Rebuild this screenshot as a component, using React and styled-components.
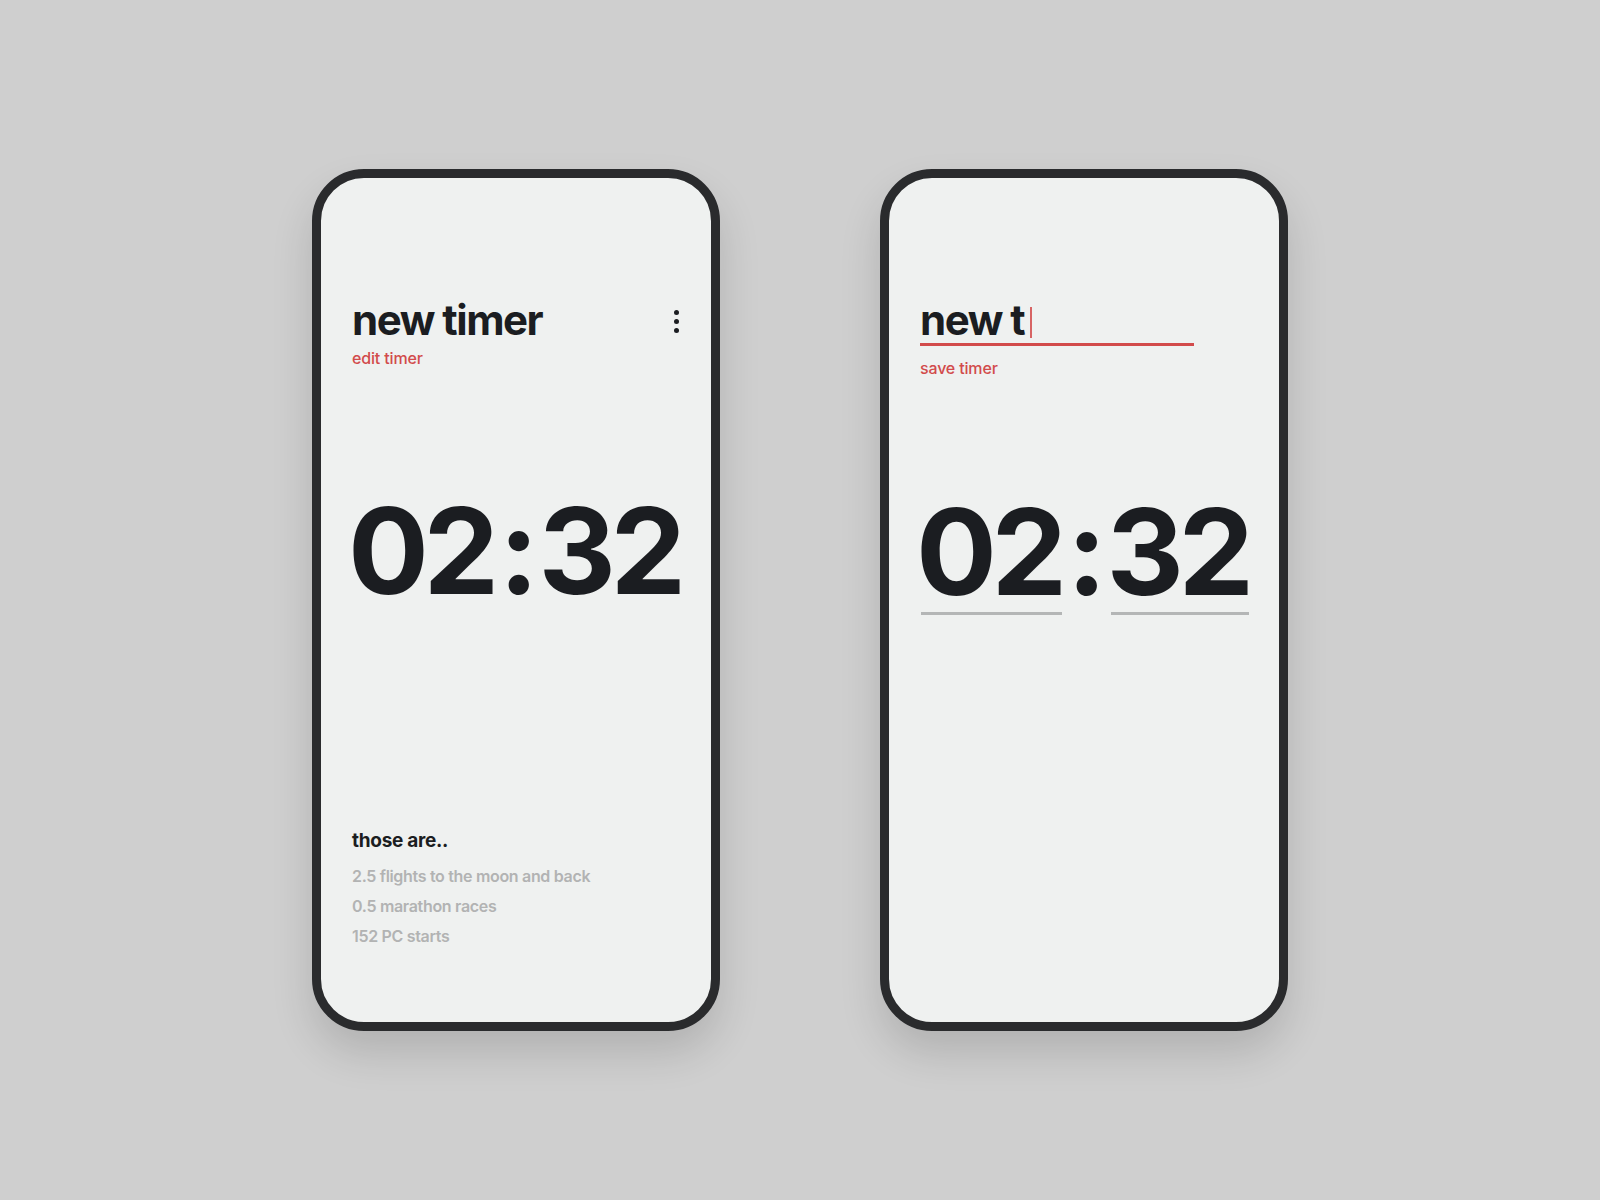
import React from 'react';
import styled, { createGlobalStyle } from 'styled-components';

const GlobalStyle = createGlobalStyle`
  html, body {
    margin: 0;
    padding: 0;
    background: #cfcfcf;
  }
  body {
    font-family: Inter, "Noto Sans", "Liberation Sans", sans-serif;
    -webkit-font-smoothing: antialiased;
  }
`;

const Stage = styled.div`
  width: 1600px;
  height: 1200px;
  display: flex;
  align-items: center;
  justify-content: center;
  gap: 160px;
`;

const Phone = styled.div`
  box-sizing: border-box;
  width: 408px;
  height: 862px;
  border: 9px solid #2a2b2d;
  border-radius: 52px;
  background: #eff1f0;
  box-shadow: 0 22px 42px rgba(0, 0, 0, 0.14);
  display: flex;
  flex-direction: column;
  padding: 116px 31px 71px 31px;
  overflow: hidden;
`;

const Header = styled.div`
  display: flex;
  align-items: flex-start;
  justify-content: space-between;
`;

const Title = styled.h1`
  margin: 0;
  font-size: 42px;
  font-weight: 700;
  line-height: 52px;
  letter-spacing: -0.035em;
  color: #1b1d21;
`;

const MenuButton = styled.button`
  border: none;
  background: none;
  padding: 0;
  margin: 16px 1px 0 0;
  display: flex;
  flex-direction: column;
  align-items: center;
  gap: 4px;
  cursor: pointer;
`;

const Dot = styled.span`
  display: block;
  width: 5px;
  height: 5px;
  border-radius: 50%;
  background: #1b1d21;
`;

const Action = styled.a`
  display: block;
  margin-top: ${(p) => p.$offset || 0}px;
  font-size: 16px;
  font-weight: 500;
  letter-spacing: -0.01em;
  color: #d24b4b;
  text-decoration: none;
  line-height: 20px;
`;

/* title being edited: red rule under the text, caret after it */
const NameField = styled.div`
  display: flex;
  align-items: flex-start;
  width: 274px;
  height: 49px;
  border-bottom: 3px solid #d24b4b;
`;

const Caret = styled.span`
  display: inline-block;
  width: 2px;
  height: 31px;
  margin: 13px 0 0 6px;
  background: #d24b4b;
  opacity: 0.85;
`;

const Clock = styled.div`
  display: flex;
  align-items: flex-start;
  margin: ${(p) => p.$offset}px 0 0 -4px;
  font-size: 120px;
  font-weight: 700;
  line-height: 1;
  letter-spacing: -0.045em;
  color: #1b1d21;
`;

const Segment = styled.span`
  display: inline-block;
  padding-bottom: 3px;
  background: ${(p) =>
    p.$editable
      ? 'linear-gradient(#b4b6b6, #b4b6b6) no-repeat 5px 100% / calc(100% - 5px) 3px'
      : 'none'};
`;

const Colon = styled.span`
  display: inline-block;
  margin: 0 5px;
`;

const Facts = styled.div`
  margin-top: auto;
  display: flex;
  flex-direction: column;
`;

const FactsTitle = styled.h2`
  margin: 0 0 8px 0;
  font-size: 19px;
  font-weight: 700;
  letter-spacing: -0.015em;
  color: #1b1d21;
  line-height: 24px;
`;

const Fact = styled.p`
  margin: 0;
  font-size: 16px;
  font-weight: 600;
  letter-spacing: -0.02em;
  line-height: 30px;
  color: #b2b3b3;
`;

const Time = ({ minutes, seconds, editable }) => (
  <>
    <Segment $editable={editable}>{minutes}</Segment>
    <Colon>:</Colon>
    <Segment $editable={editable}>{seconds}</Segment>
  </>
);

const facts = [
  '2.5 flights to the moon and back',
  '0.5 marathon races',
  '152 PC starts',
];

export default function App() {
  return (
    <>
      <GlobalStyle />
      <Stage>
        <Phone>
          <Header>
            <Title>new timer</Title>
            <MenuButton aria-label="more">
              <Dot />
              <Dot />
              <Dot />
            </MenuButton>
          </Header>
          <Action href="#" $offset={2}>edit timer</Action>
          <Clock $offset={123}>
            <Time minutes="02" seconds="32" />
          </Clock>
          <Facts>
            <FactsTitle>those are..</FactsTitle>
            {facts.map((f) => (
              <Fact key={f}>{f}</Fact>
            ))}
          </Facts>
        </Phone>

        <Phone>
          <NameField>
            <Title>new t</Title>
            <Caret />
          </NameField>
          <Action href="#" $offset={12}>save timer</Action>
          <Clock $offset={114}>
            <Time minutes="02" seconds="32" editable />
          </Clock>
        </Phone>
      </Stage>
    </>
  );
}
